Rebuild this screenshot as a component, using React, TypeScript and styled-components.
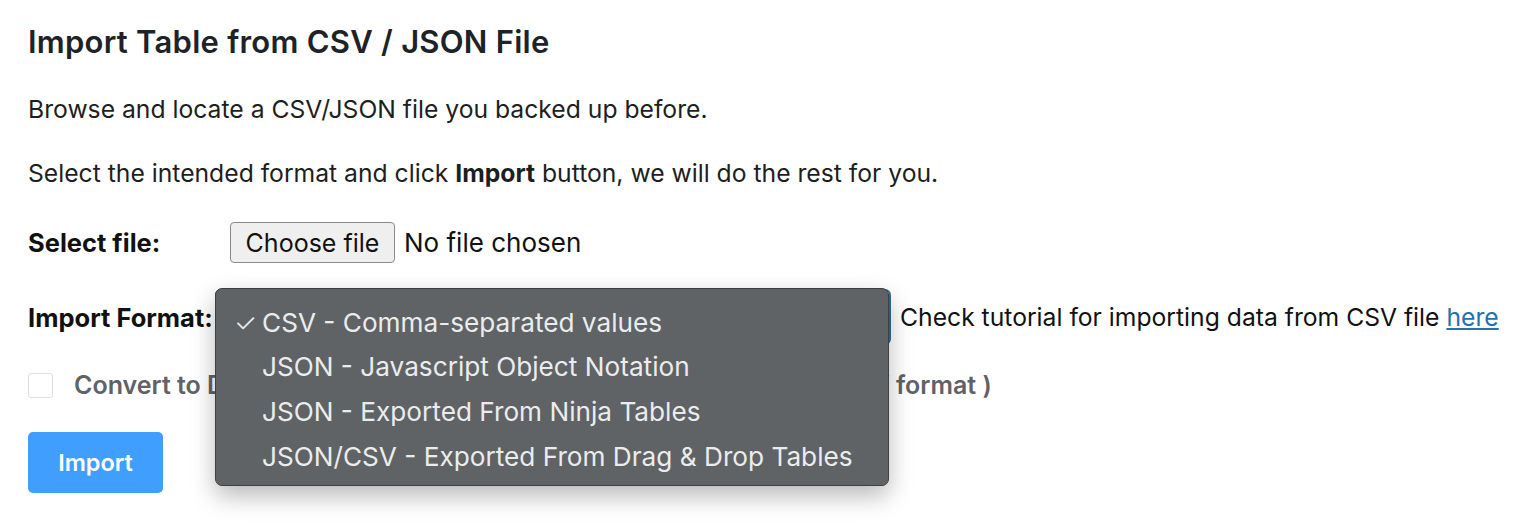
import { FC } from 'react';
import styled, { createGlobalStyle } from 'styled-components';

const GlobalStyle = createGlobalStyle`
  html, body {
    margin: 0;
    padding: 0;
    background: #ffffff;
  }
  body {
    font-family: Inter, 'Liberation Sans', Arial, sans-serif;
    color: #1e1e1e;
  }
`;

const FORMATS = [
  'CSV - Comma-separated values',
  'JSON - Javascript Object Notation',
  'JSON - Exported From Ninja Tables',
  'JSON/CSV - Exported From Drag & Drop Tables',
];

const App: FC = () => {
  return (
    <>
      <GlobalStyle />
      <Page>
        <Title>Import Table from CSV / JSON File</Title>
        <Text $top={25}>Browse and locate a CSV/JSON file you backed up before.</Text>
        <Text $top={30}>
          Select the intended format and click <b>Import</b> button, we will do the rest for you.
        </Text>

        <Row $top={32} $height={41}>
          <Label $width={202}>Select file:</Label>
          <FileButton>Choose file</FileButton>
          <FileName>No file chosen</FileName>
        </Row>

        <Row $top={26} $height={56}>
          <Label $width={187}>Import Format:</Label>
          <SelectWrap>
            <SelectBox />
            <Menu>
              {FORMATS.map((f, i) => (
                <MenuItem key={f}>
                  <Check>{i === 0 ? '✓' : ''}</Check>
                  {f}
                </MenuItem>
              ))}
            </Menu>
          </SelectWrap>
          <Hint>
            Check tutorial for importing data from CSV file <a href="#">here</a>
          </Hint>
        </Row>

        <Row $top={27} $height={26}>
          <CheckBox />
          <CheckLabel>Convert to Drag and Drop Tables ( Only for Ninja Tables JSON / CSV format )</CheckLabel>
        </Row>

        <ImportButton>Import</ImportButton>
      </Page>
    </>
  );
};

export default App;

const Page = styled.div`
  display: flex;
  flex-direction: column;
  align-items: flex-start;
  padding: 17px 28px 0;
  height: 524px;
  box-sizing: border-box;
  overflow: hidden;
`;

const Title = styled.h1`
  margin: 0;
  height: 50px;
  line-height: 50px;
  font-size: 31px;
  font-weight: 600;
  color: #1d2327;
  letter-spacing: 0.25px;
`;

const Text = styled.p<{ $top: number }>`
  margin: ${({ $top }) => $top}px 0 0;
  height: 34px;
  line-height: 34px;
  font-size: 24.7px;
  color: #1e1e1e;
  b {
    font-weight: 700;
  }
`;

const Row = styled.div<{ $top: number; $height: number }>`
  display: flex;
  align-items: center;
  margin-top: ${({ $top }) => $top}px;
  height: ${({ $height }) => $height}px;
`;

const Label = styled.div<{ $width: number }>`
  width: ${({ $width }) => $width}px;
  flex-shrink: 0;
  font-size: 25.5px;
  font-weight: 700;
  color: #111;
  white-space: nowrap;
`;

const FileButton = styled.button`
  height: 41px;
  width: 165px;
  padding: 0;
  background: #efefef;
  border: 1px solid #8a8a8a;
  border-radius: 4px;
  font-family: Inter, 'Liberation Sans', sans-serif;
  font-size: 25px;
  color: #111;
`;

const FileName = styled.span`
  margin-left: 9px;
  font-size: 26px;
  color: #111;
`;

const SelectWrap = styled.div`
  position: relative;
  height: 56px;
`;

const SelectBox = styled.div`
  width: 676px;
  height: 56px;
  box-sizing: border-box;
  border: 2px solid #2271b1;
  border-radius: 6px;
  background: #fff;
`;

const Menu = styled.ul`
  position: absolute;
  top: -1px;
  left: 0;
  width: 674px;
  height: 198px;
  box-sizing: border-box;
  margin: 0;
  padding: 11px 0 0;
  list-style: none;
  background: #5f6366;
  border: 1px solid #3d4042;
  border-radius: 7px;
  box-shadow: 0 10px 24px rgba(0, 0, 0, 0.28);
  z-index: 2;
`;

const MenuItem = styled.li`
  display: flex;
  align-items: center;
  height: 44.6px;
  padding-left: 18px;
  font-size: 26.2px;
  color: #ececec;
  white-space: nowrap;
`;

const Check = styled.span`
  display: inline-block;
  width: 28px;
  font-size: 26px;
  font-weight: 300;
`;

const Hint = styled.span`
  margin-left: 9px;
  font-size: 24.7px;
  color: #111;
  white-space: nowrap;
  a {
    color: #2271b1;
    text-decoration: underline;
  }
`;

const CheckBox = styled.span`
  width: 25px;
  height: 25px;
  flex-shrink: 0;
  box-sizing: border-box;
  border: 1px solid #dcdfe6;
  border-radius: 3px;
  background: #fff;
`;

const CheckLabel = styled.span`
  margin-left: 21px;
  font-size: 25px;
  font-weight: 600;
  color: #606266;
  white-space: nowrap;
`;

const ImportButton = styled.button`
  margin-top: 34px;
  width: 135px;
  height: 61px;
  border: none;
  border-radius: 5px;
  background: #409eff;
  color: #fff;
  font-family: Inter, 'Liberation Sans', Arial, sans-serif;
  font-size: 23.5px;
  font-weight: 600;
`;
